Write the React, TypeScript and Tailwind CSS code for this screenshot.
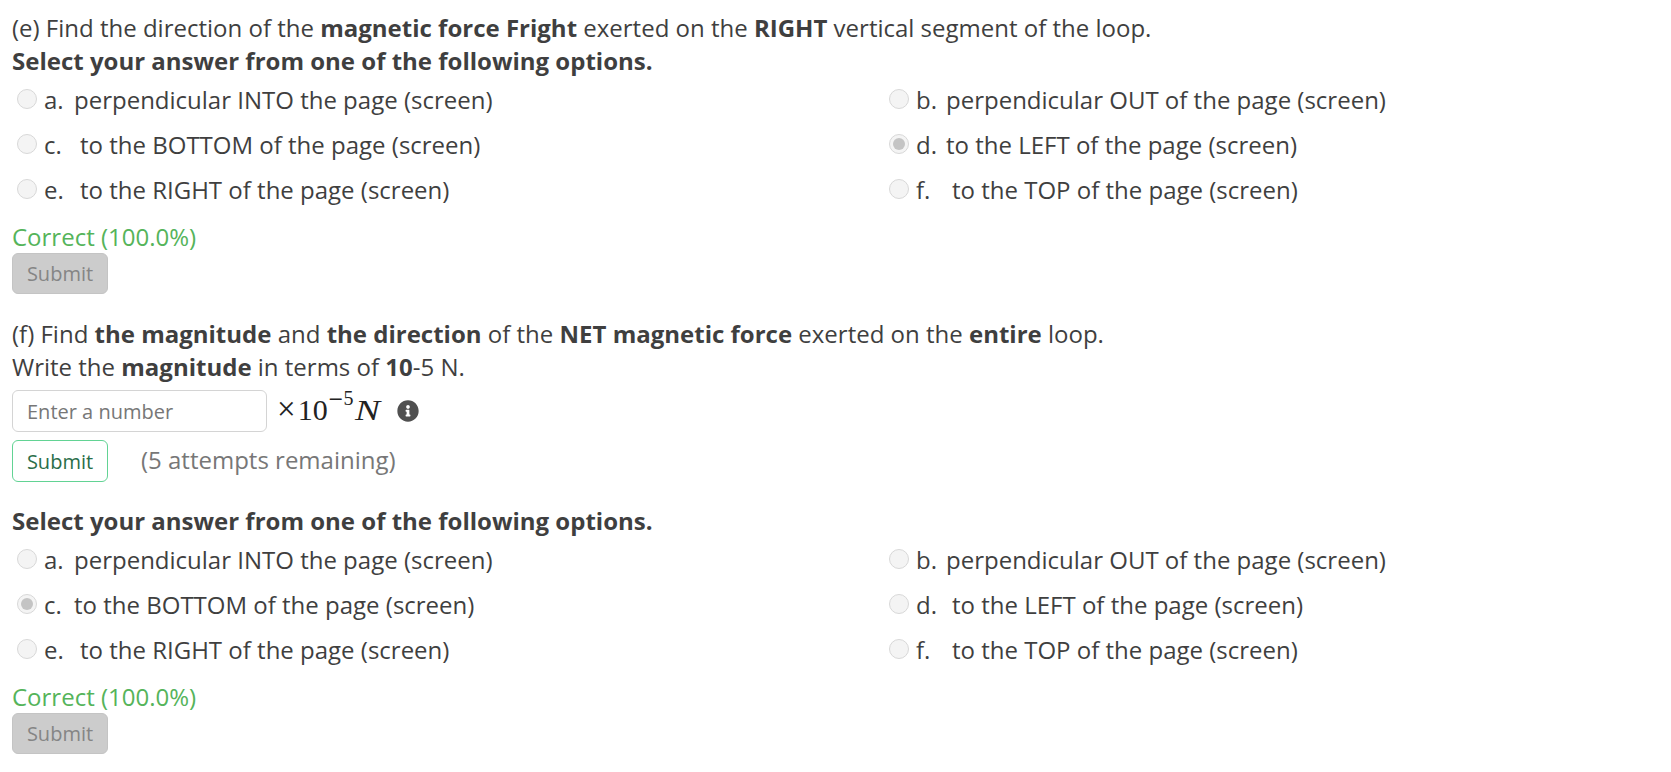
import { FaInfoCircle } from "react-icons/fa"

type Opt = { key: string; text: string; wide?: boolean; checked?: boolean }

const Radio = ({ checked }: { checked?: boolean }) => (
    <span className="flex justify-center items-center bg-[#f4f4f4] border border-[#d8d8d8] rounded-full w-5 h-5 shrink-0 -translate-y-[1px]">
        {checked && <span className="bg-[#c4c4c4] rounded-full w-3 h-3" />}
    </span>
)

const Option = ({ opt }: { opt: Opt }) => (
    <div className="flex items-center pl-[5px] h-[45px]">
        <Radio checked={opt.checked} />
        <span className="ml-[7px] w-[30px] shrink-0">{opt.key}</span>
        <span className={opt.wide ? "ml-[6px]" : ""}>{opt.text}</span>
    </div>
)

const Options = ({ items }: { items: Opt[] }) => (
    <div className="grid grid-cols-[872px_1fr]">
        {items.map((o) => (
            <Option key={o.key} opt={o} />
        ))}
    </div>
)

const Graded = () => (
    <>
        <p className="mt-[8px] h-[33px] text-[#55b45a] leading-[33px]">Correct (100.0%)</p>
        <button className="bg-[#cccccc] border border-[#c4c4c4] rounded-md w-[96px] h-[41px] text-[#858585] text-[20px]">Submit</button>
    </>
)

const App = () => {
    return (
        <div className="flex flex-col bg-white px-3 pt-[11px] w-full h-screen overflow-hidden text-[#3f3f3f] text-[24px] leading-[33px] font-['Open_Sans',sans-serif]">
            <p>(e) Find the direction of the <b>magnetic force Fright</b> exerted on the <b>RIGHT</b> vertical segment of the loop.</p>
            <p className="font-bold">Select your answer from one of the following options.</p>
            <Options
                items={[
                    { key: "a.", text: "perpendicular INTO the page (screen)" },
                    { key: "b.", text: "perpendicular OUT of the page (screen)" },
                    { key: "c.", text: "to the BOTTOM of the page (screen)", wide: true },
                    { key: "d.", text: "to the LEFT of the page (screen)", checked: true },
                    { key: "e.", text: "to the RIGHT of the page (screen)", wide: true },
                    { key: "f.", text: "to the TOP of the page (screen)", wide: true },
                ]}
            />
            <Graded />
            <p className="mt-[23px]">(f) Find <b>the magnitude</b> and <b>the direction</b> of the <b>NET magnetic force</b> exerted on the <b>entire</b> loop.</p>
            <p>Write the <b>magnitude</b> in terms of <b>10</b>-5 N.</p>
            <div className="flex items-center mt-[7px] h-[42px]">
                <div className="flex items-center bg-white px-[14px] border border-[#d4d4d4] rounded-md w-[255px] h-[42px] text-[#777777] text-[20px]">Enter a number</div>
                <span className="flex items-baseline -mt-[3px] ml-[10px] font-['Liberation_Serif',serif] text-[#222222] text-[30px]">
                    <span className="mr-[2px] text-[33px]">×</span>
                    <span>10</span>
                    <span className="top-[-15px] relative flex items-baseline text-[20px] leading-none">
                        <span className="font-['DejaVu_Serif',serif] text-[19px]">−</span>
                        <span>5</span>
                    </span>
                    <i className="inline-block ml-[1px] w-[25px] origin-left scale-x-125">N</i>
                </span>
                <FaInfoCircle className="ml-[17px] size-[22px] text-[#505050]" />
            </div>
            <div className="flex items-center mt-[8px] h-[42px]">
                <button className="bg-white border border-[#62d394] rounded-md w-[96px] h-[42px] text-[#2a6e49] text-[20px]">Submit</button>
                <span className="ml-[33px] text-[#777777] -translate-y-[2px]">(5 attempts remaining)</span>
            </div>
            <p className="mt-[22px]"><b>Select your answer from one of the following options.</b></p>
            <Options
                items={[
                    { key: "a.", text: "perpendicular INTO the page (screen)" },
                    { key: "b.", text: "perpendicular OUT of the page (screen)" },
                    { key: "c.", text: "to the BOTTOM of the page (screen)", checked: true },
                    { key: "d.", text: "to the LEFT of the page (screen)", wide: true },
                    { key: "e.", text: "to the RIGHT of the page (screen)", wide: true },
                    { key: "f.", text: "to the TOP of the page (screen)", wide: true },
                ]}
            />
            <Graded />
        </div>
    )
}

export default App
